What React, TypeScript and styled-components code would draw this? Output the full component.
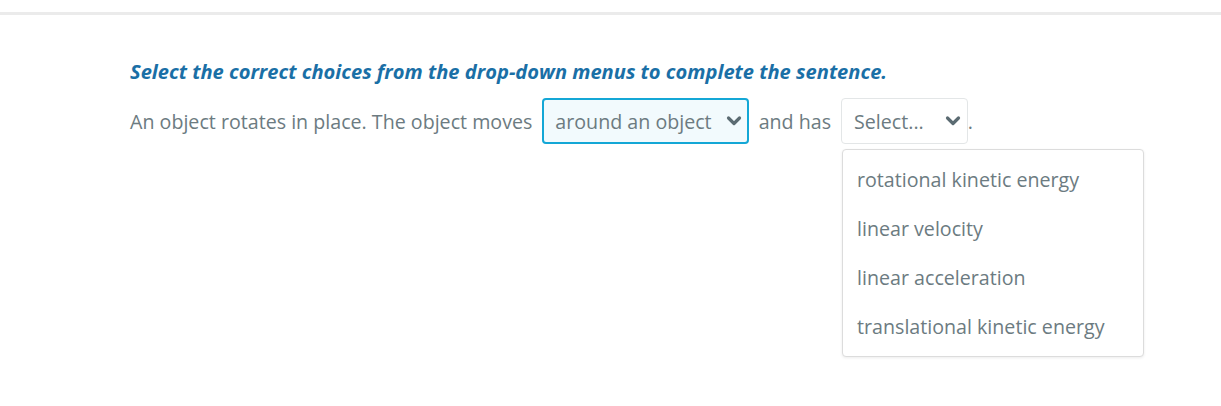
import styled, { createGlobalStyle } from "styled-components";

const GlobalStyle = createGlobalStyle`
  body {
    margin: 0;
    background: #ffffff;
    font-family: "Open Sans", "Liberation Sans", sans-serif;
  }
`;

const options = [
  "rotational kinetic energy",
  "linear velocity",
  "linear acceleration",
  "translational kinetic energy",
];

const Chevron = () => (
  <svg width="18" height="12" viewBox="0 0 18 12">
    <polyline
      points="3.5,3 9,8.5 14.5,3"
      fill="none"
      stroke="#5b6b72"
      strokeWidth="3.2"
      strokeLinecap="round"
      strokeLinejoin="round"
    />
  </svg>
);

const App = () => {
  return (
    <>
      <GlobalStyle />
      <Pagina>
        <Linea />
        <Contenido>
          <Titulo>
            Select the correct choices from the drop-down menus to complete the
            sentence.
          </Titulo>
          <Frase>
            <span>An object rotates in place. The object moves</span>
            <Selector $activo>
              <span>around an object</span>
              <Chevron />
            </Selector>
            <span>and has</span>
            <SelectorEnvoltura>
              <Selector>
                <span>Select...</span>
                <Chevron />
              </Selector>
              <Menu>
                {options.map((o) => (
                  <Opcion key={o}>{o}</Opcion>
                ))}
              </Menu>
            </SelectorEnvoltura>
            <Punto>.</Punto>
          </Frase>
        </Contenido>
      </Pagina>
    </>
  );
};
export default App;

const Pagina = styled.div`
  width: 100%;
  height: 406px;
  padding-top: 12px;
  box-sizing: border-box;
`;

const Linea = styled.div`
  height: 3px;
  background-color: #ebebeb;
`;

const Contenido = styled.div`
  padding: 44px 0 0 130px;
`;

const Titulo = styled.div`
  color: #1a6fa6;
  font-weight: 700;
  font-style: italic;
  font-size: 20.1px;
  line-height: 26px;
`;

const Frase = styled.div`
  margin-top: 13px;
  display: flex;
  align-items: center;
  gap: 10px;
  color: #6c7b81;
  font-size: 19.65px;
`;

const Selector = styled.div<{ $activo?: boolean }>`
  box-sizing: border-box;
  height: 46px;
  display: flex;
  align-items: center;
  gap: ${(p) => (p.$activo ? "13px" : "20px")};
  padding: ${(p) => (p.$activo ? "0 4px 0 11px" : "0 5px 0 12px")};
  border: ${(p) => (p.$activo ? "2px solid #14a7d6" : "1px solid #e3e6e7")};
  background-color: ${(p) => (p.$activo ? "#f2fafd" : "#ffffff")};
  border-radius: 4px;
  color: #6c7b81;
`;

const SelectorEnvoltura = styled.div`
  position: relative;
`;

const Punto = styled.span`
  margin-left: -10px;
`;

const Menu = styled.div`
  position: absolute;
  top: 51px;
  left: 1px;
  width: 302px;
  box-sizing: border-box;
  padding: 5px 0;
  background: #ffffff;
  border: 1px solid #dcdcdc;
  border-radius: 4px;
  box-shadow: 0 1px 3px rgba(0, 0, 0, 0.08);
`;

const Opcion = styled.div`
  padding: 0 14px;
  height: 49px;
  display: flex;
  align-items: center;
  white-space: nowrap;
`;
